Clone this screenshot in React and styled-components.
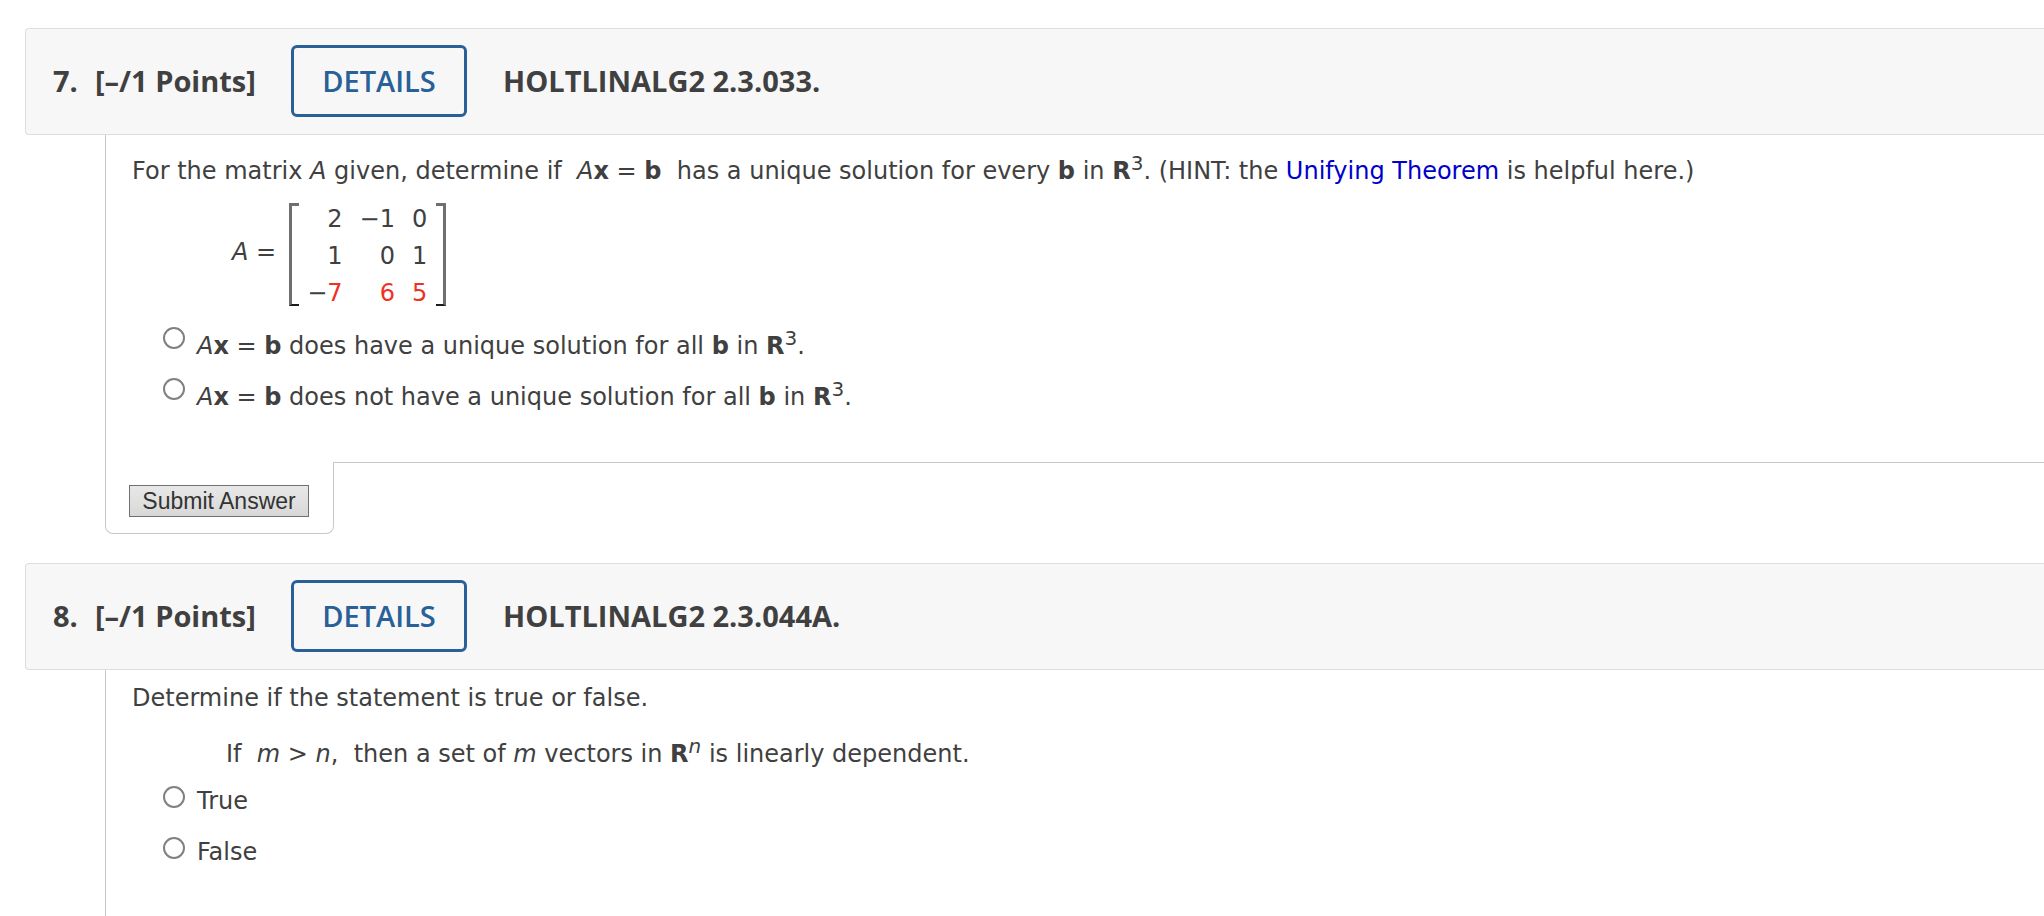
import styled, { createGlobalStyle } from "styled-components";

const GlobalStyle = createGlobalStyle`
    * {
        box-sizing: border-box;
    }

    body {
        margin: 0;
        background: #ffffff;
        color: #404040;
        font-family: Verdana, "DejaVu Sans", sans-serif;
        font-size: 24px;
        line-height: 32px;
        overflow-x: hidden;
    }
`;

const Page = styled.main`
    display: flex;
    flex-direction: column;
    gap: 29px;
    padding: 28px 0 0 25px;
`;

const Header = styled.header`
    display: flex;
    align-items: center;
    height: 107px;
    padding: 0 0 2px 27px;
    background: #f7f7f7;
    border: 1px solid #dedede;
    border-right: none;
    border-radius: 4px 0 0 4px;
    font-family: "Open Sans", sans-serif;
    font-size: 29px;
    font-weight: 700;
    line-height: 40px;
`;

const Heading = styled.h2`
    margin: 0;
    font-size: inherit;
    font-weight: inherit;
`;

const Number = styled.span`
    width: 42px;
`;

const Points = styled.span`
    width: 196px;
`;

const DetailsButton = styled.button`
    width: 176px;
    height: 72px;
    margin-right: 36px;
    padding: 0;
    background: transparent;
    border: 3px solid #286097;
    border-radius: 6px;
    color: #286097;
    font: inherit;
    font-weight: 600;
    cursor: pointer;
`;

const Body = styled.div`
    margin-left: 80px;
    padding: ${(props) => props.$top}px 0 44px 26px;
    border-left: 1px solid #c8c8c8;
`;

const Text = styled.p`
    margin: 0;
`;

const Statement = styled.p`
    margin: 24px 0 0 94px;
`;

const Link = styled.a`
    color: #0000cc;
    text-decoration: none;
`;

const Sup = styled.sup`
    font-size: 20px;
    line-height: 0;
`;

const Equation = styled.div`
    display: flex;
    align-items: center;
    gap: 13px;
    margin: 16px 0 0 100px;
`;

const LeftSide = styled.span`
    padding-bottom: 5px;
`;

const Brackets = styled.div`
    display: flex;
    height: 103px;
`;

const Bracket = styled.span`
    width: 10px;
    border: 3px solid #6f6f6f;
    border-bottom: 2px solid #1c1c1c;
    border-${(props) => props.$open}: none;
`;

const Matrix = styled.table`
    border-collapse: collapse;
    line-height: 37px;
    margin-top: -2px;

    td {
        padding: 0 9px 0 8px;
        text-align: right;
    }
`;

const Red = styled.span`
    color: #ee3124;
`;

const Options = styled.div`
    display: flex;
    flex-direction: column;
    gap: 9px;
    margin: ${(props) => props.$top}px 0 0 31px;
`;

const Option = styled.label`
    display: flex;
    align-items: center;
    gap: 12px;
    min-height: 42px;
`;

const Radio = styled.input`
    appearance: none;
    flex: none;
    width: 22px;
    height: 22px;
    margin: 0 0 ${(props) => (props.$raised ? 16 : 8)}px;
    background: #ffffff;
    border: 2px solid #808080;
    border-radius: 50%;

    &:checked {
        background: radial-gradient(#286097 45%, #ffffff 50%);
    }
`;

const Footer = styled.div`
    display: flex;
    margin-left: 80px;
`;

const SubmitTab = styled.div`
    padding: 23px 24px 16px 23px;
    border: 1px solid #c8c8c8;
    border-top: none;
    border-radius: 0 0 8px 8px;
`;

const Rule = styled.div`
    flex: 1;
    border-top: 1px solid #c8c8c8;
`;

const SubmitButton = styled.button`
    display: block;
    width: 180px;
    height: 32px;
    padding: 0;
    background: linear-gradient(#e8e8e8, #d8d8d8);
    border: 1px solid #707070;
    color: #333333;
    font-family: Arial, "Liberation Sans", sans-serif;
    font-size: 23px;
    line-height: 28px;
    cursor: pointer;
`;

const matrix = [
    ["2", "−1", "0"],
    ["1", "0", "1"],
    ["−7", "6", "5"],
];

const QuestionHeader = ({ number, title }) => (
    <Header>
        <Number>{number}.</Number>
        <Points>[–/1 Points]</Points>
        <DetailsButton type="button">DETAILS</DetailsButton>
        <Heading>{title}</Heading>
    </Header>
);

const Choice = ({ name, raised, children }) => (
    <Option>
        <Radio type="radio" name={name} $raised={raised} />
        <span>{children}</span>
    </Option>
);

const RealSpace = () => (
    <>
        <b>R</b>
        <Sup>3</Sup>
    </>
);

const Cell = ({ value, random }) => {
    if (!random) return value;
    const negative = value.startsWith("−");
    return (
        <>
            {negative && "−"}
            <Red>{negative ? value.slice(1) : value}</Red>
        </>
    );
};

export default function App() {
    return (
        <>
            <GlobalStyle />
            <Page>
                <section>
                    <QuestionHeader number={7} title="HOLTLINALG2 2.3.033." />
                    <Body $top={20}>
                        <Text>
                            For the matrix <i>A</i> given, determine if &nbsp;<i>A</i>
                            <b>x</b> = <b>b</b>&nbsp; has a unique solution for every <b>b</b> in{" "}
                            <RealSpace />. (HINT: the <Link href="#">Unifying Theorem</Link> is
                            helpful here.)
                        </Text>
                        <Equation>
                            <LeftSide>
                                <i>A</i> =
                            </LeftSide>
                            <Brackets>
                                <Bracket $open="right" />
                                <Matrix>
                                    <tbody>
                                        {matrix.map((row, i) => (
                                            <tr key={i}>
                                                {row.map((value, j) => (
                                                    <td key={j}>
                                                        <Cell value={value} random={i === 2} />
                                                    </td>
                                                ))}
                                            </tr>
                                        ))}
                                    </tbody>
                                </Matrix>
                                <Bracket $open="left" />
                            </Brackets>
                        </Equation>
                        <Options $top={19}>
                            <Choice name="q7" raised>
                                <i>A</i>
                                <b>x</b> = <b>b</b> does have a unique solution for all <b>b</b> in{" "}
                                <RealSpace />.
                            </Choice>
                            <Choice name="q7" raised>
                                <i>A</i>
                                <b>x</b> = <b>b</b> does not have a unique solution for all{" "}
                                <b>b</b> in <RealSpace />.
                            </Choice>
                        </Options>
                    </Body>
                    <Footer>
                        <SubmitTab>
                            <SubmitButton type="button">Submit Answer</SubmitButton>
                        </SubmitTab>
                        <Rule />
                    </Footer>
                </section>
                <section>
                    <QuestionHeader number={8} title="HOLTLINALG2 2.3.044A." />
                    <Body $top={12}>
                        <Text>Determine if the statement is true or false.</Text>
                        <Statement>
                            If &nbsp;<i>m</i> &gt; <i>n</i>,&nbsp; then a set of <i>m</i> vectors in{" "}
                            <b>R</b>
                            <Sup>
                                <i>n</i>
                            </Sup>{" "}
                            is linearly dependent.
                        </Statement>
                        <Options $top={10}>
                            <Choice name="q8">True</Choice>
                            <Choice name="q8">False</Choice>
                        </Options>
                    </Body>
                </section>
            </Page>
        </>
    );
}
